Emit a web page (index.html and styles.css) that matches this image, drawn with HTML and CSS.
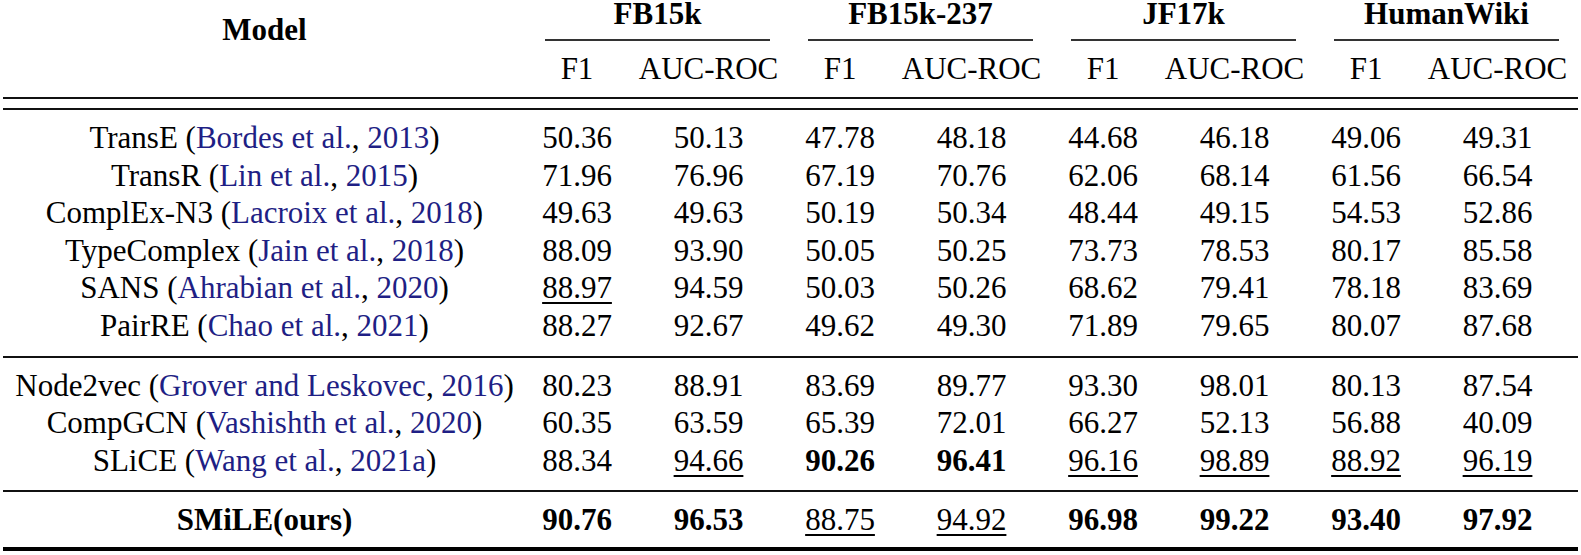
FILE: index.html
```html
<!DOCTYPE html>
<html lang="en">
<head>
    <meta charset="UTF-8">
    <meta name="viewport" content="width=device-width, initial-scale=1.0">
    <title>Triple Classification Results</title>
    <link rel="stylesheet" href="styles.css">
</head>
<body>

    <table class="results">
        <colgroup>
            <col class="col-model">
            <col class="col-f1"><col class="col-auc">
            <col class="col-f1"><col class="col-auc">
            <col class="col-f1"><col class="col-auc">
            <col class="col-f1"><col class="col-auc">
        </colgroup>

        <thead>
            <tr>
                <th class="model-head" rowspan="2">Model</th>
                <th class="group" colspan="2"><div class="group-name">FB15k</div><div class="cmidrule"></div></th>
                <th class="group" colspan="2"><div class="group-name">FB15k-237</div><div class="cmidrule"></div></th>
                <th class="group" colspan="2"><div class="group-name">JF17k</div><div class="cmidrule"></div></th>
                <th class="group" colspan="2"><div class="group-name">HumanWiki</div><div class="cmidrule"></div></th>
            </tr>
            <tr class="metrics">
                <th>F1</th><th>AUC-ROC</th>
                <th>F1</th><th>AUC-ROC</th>
                <th>F1</th><th>AUC-ROC</th>
                <th>F1</th><th>AUC-ROC</th>
            </tr>
            <tr class="double-gap"><th colspan="9"></th></tr>
        </thead>

        <!-- knowledge graph embedding baselines -->
        <tbody>
            <tr>
                <td class="model">TransE (<span class="cite">Bordes et al.</span>, <span class="cite">2013</span>)</td>
                <td>50.36</td><td>50.13</td><td>47.78</td><td>48.18</td><td>44.68</td><td>46.18</td><td>49.06</td><td>49.31</td>
            </tr>
            <tr>
                <td class="model">TransR (<span class="cite">Lin et al.</span>, <span class="cite">2015</span>)</td>
                <td>71.96</td><td>76.96</td><td>67.19</td><td>70.76</td><td>62.06</td><td>68.14</td><td>61.56</td><td>66.54</td>
            </tr>
            <tr>
                <td class="model">ComplEx-N3 (<span class="cite">Lacroix et al.</span>, <span class="cite">2018</span>)</td>
                <td>49.63</td><td>49.63</td><td>50.19</td><td>50.34</td><td>48.44</td><td>49.15</td><td>54.53</td><td>52.86</td>
            </tr>
            <tr>
                <td class="model">TypeComplex (<span class="cite">Jain et al.</span>, <span class="cite">2018</span>)</td>
                <td>88.09</td><td>93.90</td><td>50.05</td><td>50.25</td><td>73.73</td><td>78.53</td><td>80.17</td><td>85.58</td>
            </tr>
            <tr>
                <td class="model">SANS (<span class="cite">Ahrabian et al.</span>, <span class="cite">2020</span>)</td>
                <td><u>88.97</u></td><td>94.59</td><td>50.03</td><td>50.26</td><td>68.62</td><td>79.41</td><td>78.18</td><td>83.69</td>
            </tr>
            <tr>
                <td class="model">PairRE (<span class="cite">Chao et al.</span>, <span class="cite">2021</span>)</td>
                <td>88.27</td><td>92.67</td><td>49.62</td><td>49.30</td><td>71.89</td><td>79.65</td><td>80.07</td><td>87.68</td>
            </tr>
        </tbody>

        <!-- graph based baselines -->
        <tbody>
            <tr>
                <td class="model">Node2vec (<span class="cite">Grover and Leskovec</span>, <span class="cite">2016</span>)</td>
                <td>80.23</td><td>88.91</td><td>83.69</td><td>89.77</td><td>93.30</td><td>98.01</td><td>80.13</td><td>87.54</td>
            </tr>
            <tr>
                <td class="model">CompGCN (<span class="cite">Vashishth et al.</span>, <span class="cite">2020</span>)</td>
                <td>60.35</td><td>63.59</td><td>65.39</td><td>72.01</td><td>66.27</td><td>52.13</td><td>56.88</td><td>40.09</td>
            </tr>
            <tr>
                <td class="model">SLiCE (<span class="cite">Wang et al.</span>, <span class="cite">2021a</span>)</td>
                <td>88.34</td><td><u>94.66</u></td><td><b>90.26</b></td><td><b>96.41</b></td><td><u>96.16</u></td><td><u>98.89</u></td><td><u>88.92</u></td><td><u>96.19</u></td>
            </tr>
        </tbody>

        <!-- our model -->
        <tbody class="ours">
            <tr>
                <td class="model"><b>SMiLE(ours)</b></td>
                <td><b>90.76</b></td><td><b>96.53</b></td><td><u>88.75</u></td><td><u>94.92</u></td><td><b>96.98</b></td><td><b>99.22</b></td><td><b>93.40</b></td><td><b>97.92</b></td>
            </tr>
        </tbody>
    </table>

</body>
</html>
```

FILE: styles.css
```css
body {
    margin: 0;
    background-color: #fff;
    font-family: "Liberation Serif", "Times New Roman", serif;
    color: #000;
}

.results {
    margin-left: 3px;
    border-collapse: separate;
    border-spacing: 0;
    table-layout: fixed;
    width: 1575px;
    font-family: "Liberation Serif", serif;
    font-size: 31px;
}

.col-model {
    width: 523px;
}

.col-f1 {
    width: 102px;
}

.col-auc {
    width: 161px;
}

th, td {
    padding: 0;
    text-align: center;
    white-space: nowrap;
}

/* header */
.model-head {
    vertical-align: top;
    padding-top: 12px;
    line-height: 36px;
    border-bottom: 2px solid #111;
}

.group {
    vertical-align: top;
}

.group-name {
    height: 26px;
    line-height: 28px;
}

.cmidrule {
    margin: 13px 19px 0;
    border-top: 2px solid #333;
}

.metrics th {
    font-weight: normal;
    height: 56px;
    line-height: 56px;
    border-bottom: 2px solid #111;
}

.double-gap th {
    height: 9px;
    border-bottom: 2px solid #111;
}

/* body rows */
tbody td {
    line-height: 37.6px;
}

tbody tr:first-child td {
    padding-top: 9px;
}

tbody tr:last-child td {
    padding-bottom: 11px;
}

tbody + tbody tr:first-child td {
    border-top: 2px solid #111;
}

.ours tr:last-child td {
    padding-bottom: 8px;
    border-bottom: 4px solid #000;
}

.cite {
    color: #1f1f85;
}

u {
    text-decoration-thickness: 1.5px;
    text-underline-offset: 4px;
}
```
